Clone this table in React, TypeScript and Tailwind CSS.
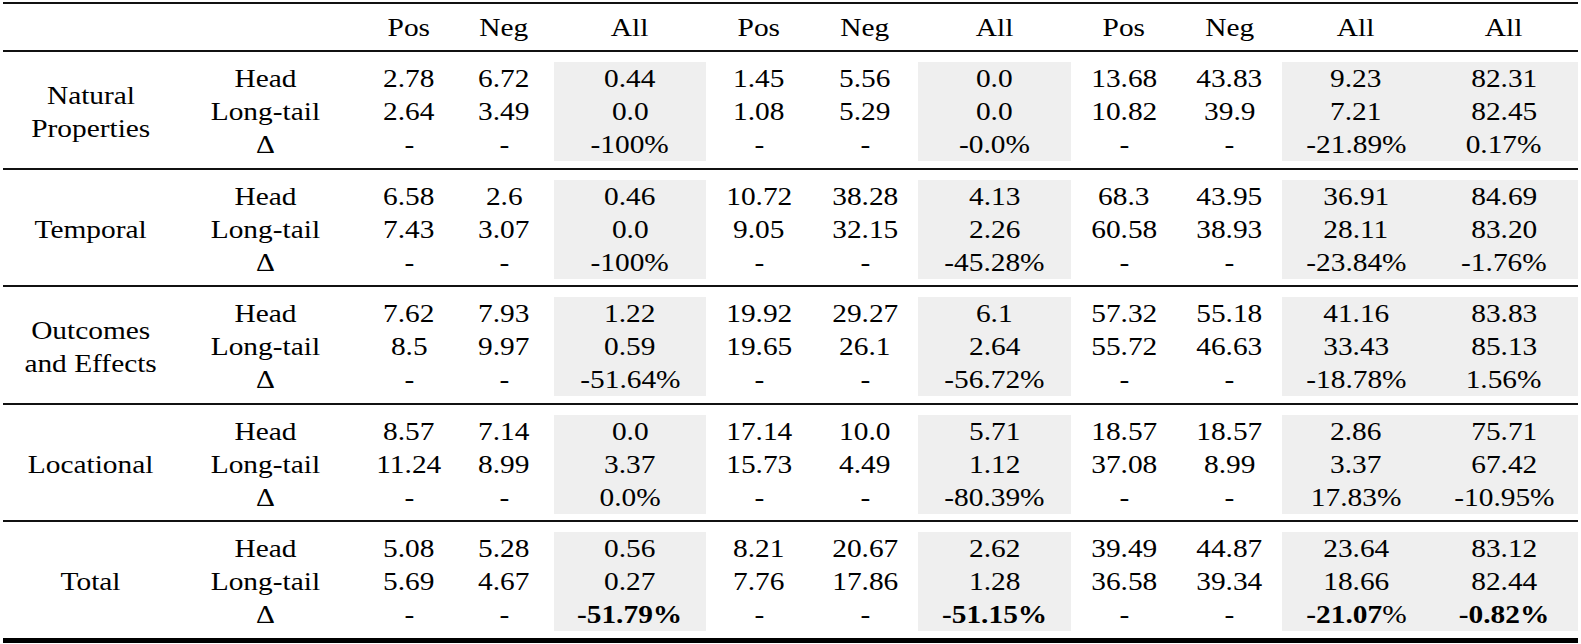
import type { ReactNode } from "react";

type Section = {
  name: ReactNode;
  head: string[];
  tail: string[];
  delta: ReactNode[];
};

const shaded = [2, 5, 8, 9];

const sections: Section[] = [
  {
    name: (
      <>
        <T>Natural</T>
        <br />
        <T>Properties</T>
      </>
    ),
    head: ["2.78", "6.72", "0.44", "1.45", "5.56", "0.0", "13.68", "43.83", "9.23", "82.31"],
    tail: ["2.64", "3.49", "0.0", "1.08", "5.29", "0.0", "10.82", "39.9", "7.21", "82.45"],
    delta: ["-", "-", "-100%", "-", "-", "-0.0%", "-", "-", "-21.89%", "0.17%"],
  },
  {
    name: <T>Temporal</T>,
    head: ["6.58", "2.6", "0.46", "10.72", "38.28", "4.13", "68.3", "43.95", "36.91", "84.69"],
    tail: ["7.43", "3.07", "0.0", "9.05", "32.15", "2.26", "60.58", "38.93", "28.11", "83.20"],
    delta: ["-", "-", "-100%", "-", "-", "-45.28%", "-", "-", "-23.84%", "-1.76%"],
  },
  {
    name: (
      <>
        <T>Outcomes</T>
        <br />
        <T>and Effects</T>
      </>
    ),
    head: ["7.62", "7.93", "1.22", "19.92", "29.27", "6.1", "57.32", "55.18", "41.16", "83.83"],
    tail: ["8.5", "9.97", "0.59", "19.65", "26.1", "2.64", "55.72", "46.63", "33.43", "85.13"],
    delta: ["-", "-", "-51.64%", "-", "-", "-56.72%", "-", "-", "-18.78%", "1.56%"],
  },
  {
    name: <T>Locational</T>,
    head: ["8.57", "7.14", "0.0", "17.14", "10.0", "5.71", "18.57", "18.57", "2.86", "75.71"],
    tail: ["11.24", "8.99", "3.37", "15.73", "4.49", "1.12", "37.08", "8.99", "3.37", "67.42"],
    delta: ["-", "-", "0.0%", "-", "-", "-80.39%", "-", "-", "17.83%", "-10.95%"],
  },
  {
    name: <T>Total</T>,
    head: ["5.08", "5.28", "0.56", "8.21", "20.67", "2.62", "39.49", "44.87", "23.64", "83.12"],
    tail: ["5.69", "4.67", "0.27", "7.76", "17.86", "1.28", "36.58", "39.34", "18.66", "82.44"],
    delta: [
      "-",
      "-",
      <b key="a">-51.79%</b>,
      "-",
      "-",
      <b key="b">-51.15%</b>,
      "-",
      "-",
      <span key="c">
        <b>-21.07</b>%
      </span>,
      <b key="d">-0.82%</b>,
    ],
  },
];

const headers = ["Pos", "Neg", "All", "Pos", "Neg", "All", "Pos", "Neg", "All", "All"];

const grid =
  "grid grid-cols-[163px_198px_90px_100px_152px_106px_106px_153px_106px_105px_148px_148px]";

// the source table is a bit wider than tall, so stretch each text run
function T({ children }: { children: ReactNode }) {
  return <span className="inline-block scale-x-[1.13] whitespace-nowrap">{children}</span>;
}

export default function App() {
  return (
    <div className="w-[1581px] h-[644px] overflow-hidden bg-white text-black font-['Liberation_Serif'] text-[26px]">
      <div className="ml-[3px] mt-[2px] w-[1575px] border-t-2 border-[#111]">
        <div className={`${grid} h-[48px] items-center border-b-2 border-[#111] text-center leading-[33px]`}>
          <div />
          <div />
          {headers.map((h, i) => (
            <div key={i}>
              <T>{h}</T>
            </div>
          ))}
        </div>

        {sections.map((s, si) => (
          <div
            key={si}
            className={`${grid} pt-[10px] pb-[6.5px] text-center leading-[33px] ${
              si === sections.length - 1 ? "border-b-[5px] border-black" : "border-b-2 border-[#111]"
            }`}
          >
            <div className="self-center pl-[13px]">{s.name}</div>
            <div className="flex flex-col items-center">
              <T>Head</T>
              <T>Long-tail</T>
              <T>Δ</T>
            </div>
            {s.head.map((_, ci) => (
              <div
                key={ci}
                className={`flex flex-col items-center ${shaded.includes(ci) ? "bg-[#efefef]" : ""}`}
              >
                <T>{s.head[ci]}</T>
                <T>{s.tail[ci]}</T>
                <T>{s.delta[ci]}</T>
              </div>
            ))}
          </div>
        ))}
      </div>
    </div>
  );
}
